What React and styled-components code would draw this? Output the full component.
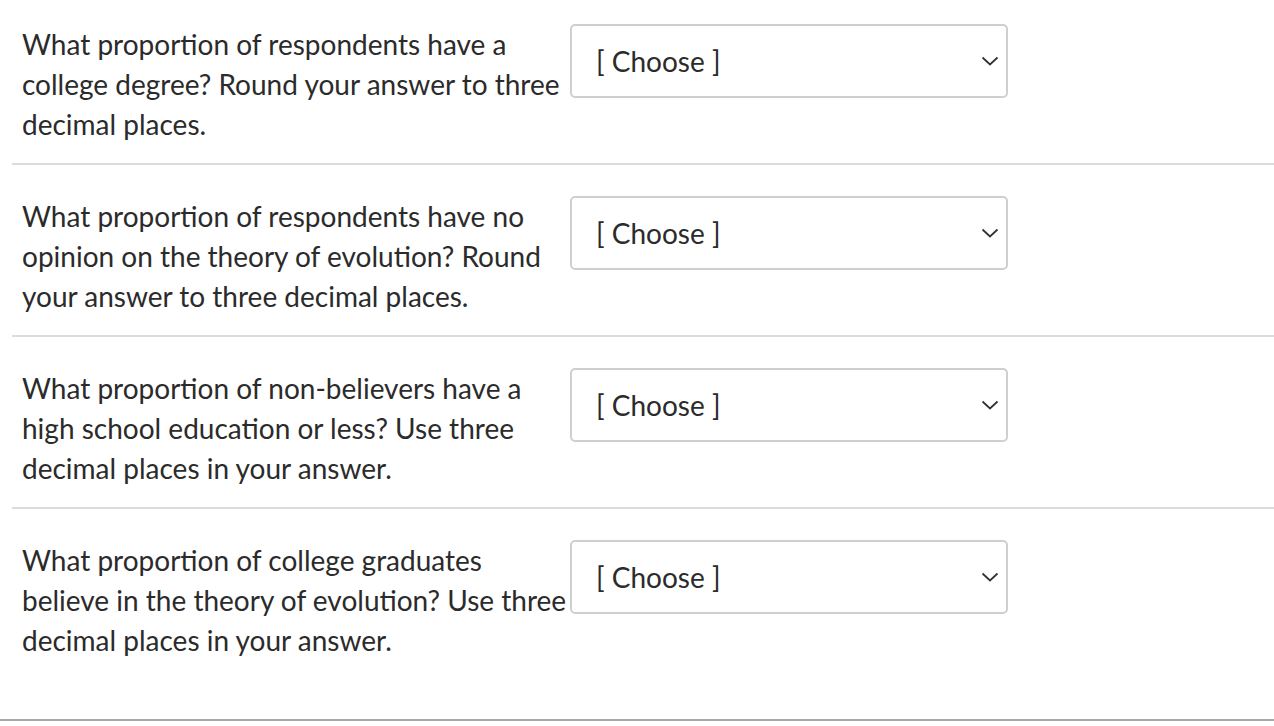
import React from "react";
import styled, { createGlobalStyle } from "styled-components";

const Global = createGlobalStyle`
  html, body { margin: 0; padding: 0; background: #fff; }
  body { font-family: Lato, "Open Sans", sans-serif; color: #2d2d2d; }
`;

const Page = styled.div`
  width: 1274px;
  height: 726px;
  overflow: hidden;
  display: flex;
  flex-direction: column;
`;

const List = styled.div`
  display: flex;
  flex-direction: column;
  height: 721px;
  border-bottom: 2px solid #aaaaaa;
  box-sizing: border-box;
`;

const Row = styled.div`
  display: flex;
  align-items: flex-start;
  margin-left: 12px;
  padding: ${(p) => (p.$first ? "24px" : "31px")} 0 19px 10px;
  border-bottom: ${(p) => (p.$last ? "none" : "2px solid #dcdcdc")};
`;

const Question = styled.div`
  width: 548px;
  flex-shrink: 0;
  font-size: 28px;
  line-height: 40px;
  color: #2b2b2b;
`;

const Select = styled.div`
  box-sizing: border-box;
  width: 438px;
  height: 74px;
  border: 2px solid #cfcfcf;
  border-radius: 5px;
  display: flex;
  align-items: center;
  justify-content: space-between;
  padding: 0 7px 0 24px;
  font-size: 28px;
  color: #2b2b2b;
`;

const Chevron = () => (
  <svg width="18" height="10" viewBox="0 0 18 10">
    <path d="M1.5 1.5 L9 8.5 L16.5 1.5" fill="none" stroke="#333" strokeWidth="1.8" />
  </svg>
);

const questions = [
  "What proportion of respondents have a college degree? Round your answer to three decimal places.",
  "What proportion of respondents have no opinion on the theory of evolution? Round your answer to three decimal places.",
  "What proportion of non-believers have a high school education or less? Use three decimal places in your answer.",
  "What proportion of college graduates believe in the theory of evolution? Use three decimal places in your answer.",
];

export default function App() {
  return (
    <Page>
      <Global />
      <List>
        {questions.map((q, i) => (
          <Row key={i} $first={i === 0} $last={i === questions.length - 1}>
            <Question>{q}</Question>
            <Select>
              <span>[ Choose ]</span>
              <Chevron />
            </Select>
          </Row>
        ))}
      </List>
    </Page>
  );
}
